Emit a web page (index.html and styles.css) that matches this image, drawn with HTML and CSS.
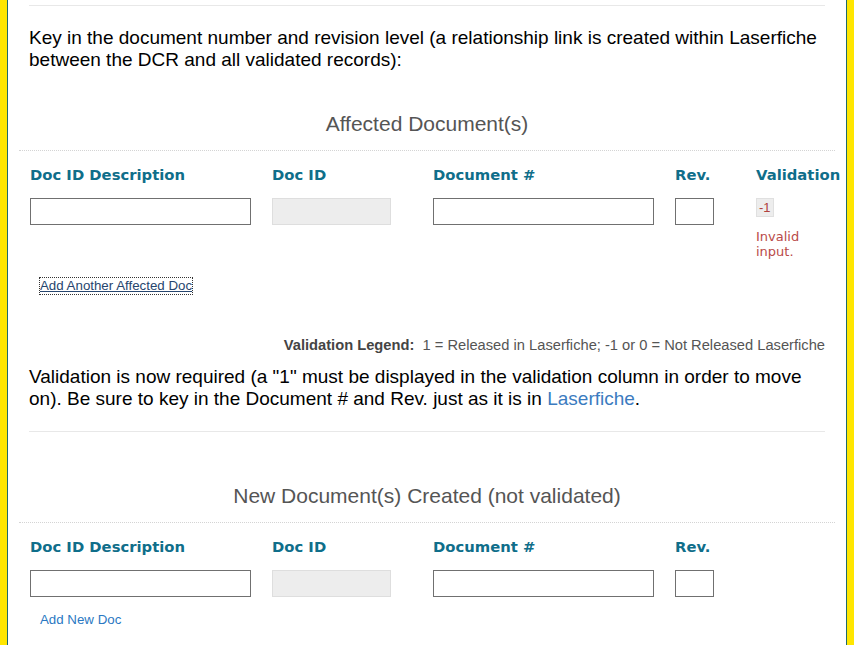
FILE: index.html
```html
<!DOCTYPE html>
<html>
<head>
    <title>Document Change Request</title>
    <link rel="stylesheet" href="styles.css">
</head>
<body>

<div class="page">
    <hr class="rule rule-top">

    <p class="intro">Key in the document number and revision level (a relationship link is created within Laserfiche between the DCR and all validated records):</p>

    <!-- Affected documents -->
    <div class="section">
        <h2 class="section-title">Affected Document(s)</h2>
        <div class="doc-grid">
            <label class="col-head">Doc ID Description</label>
            <label class="col-head">Doc ID</label>
            <label class="col-head">Document #</label>
            <label class="col-head">Rev.</label>
            <label class="col-head">Validation</label>

            <div class="cell"><input type="text" class="field field-wide"></div>
            <div class="cell"><input type="text" class="field field-mid" readonly></div>
            <div class="cell"><input type="text" class="field field-wide"></div>
            <div class="cell"><input type="text" class="field field-rev"></div>
            <div class="cell">
                <span class="valid-box">-1</span>
                <div class="error-msg">Invalid<br>input.</div>
            </div>
        </div>
        <a href="#" class="add-link add-focus">Add Another Affected Doc</a>
    </div>

    <p class="legend"><b>Validation Legend:</b>&nbsp; 1 = Released in Laserfiche; -1 or 0 = Not Released Laserfiche</p>

    <p class="note">Validation is now required (a "1" must be displayed in the validation column in order to move on). Be sure to key in the Document # and Rev. just as it is in <a href="#" class="note-link">Laserfiche</a>.</p>

    <hr class="rule rule-mid">

    <!-- New documents -->
    <div class="section">
        <h2 class="section-title">New Document(s) Created (not validated)</h2>
        <div class="doc-grid">
            <label class="col-head">Doc ID Description</label>
            <label class="col-head">Doc ID</label>
            <label class="col-head">Document #</label>
            <label class="col-head">Rev.</label>
            <span></span>

            <div class="cell"><input type="text" class="field field-wide"></div>
            <div class="cell"><input type="text" class="field field-mid" readonly></div>
            <div class="cell"><input type="text" class="field field-wide"></div>
            <div class="cell"><input type="text" class="field field-rev"></div>
            <div class="cell"></div>
        </div>
        <a href="#" class="add-link add-plain">Add New Doc</a>
    </div>
</div>

</body>
</html>
```

FILE: styles.css
```css
html, body {
    height: 100%;
}
body {
    margin: 0;
    background: #ffe600;
    font-family: 'Liberation Sans', Arial, sans-serif;
    color: #000;
    overflow: hidden;
}
.page {
    margin: 0 7px;
    min-height: 100%;
    background: #fff;
    border-left: 1px solid #1f6a6a;
    border-right: 1px solid #1f6a6a;
    padding: 0 11px;
}

.rule {
    border: none;
    border-top: 1px solid #e8e8e8;
    margin: 0 10px;
}
.rule-top {
    position: relative;
    top: 5px;
}
.rule-mid {
    margin-top: 21px;
}

.intro {
    font-size: 19px;
    line-height: 22px;
    margin: 26px 10px 0;
}

.section-title {
    font-size: 21px;
    font-weight: normal;
    color: #555;
    text-align: center;
    line-height: 24px;
    margin: 0;
    padding-bottom: 14px;
    border-bottom: 1px dotted #d4d4d4;
}
.section:first-of-type .section-title {
    margin-top: 41px;
}
.rule-mid + .section .section-title {
    margin-top: 52px;
}

.doc-grid {
    display: grid;
    grid-template-columns: 242px 161px 242px 81px 1fr;
    padding-left: 11px;
    margin-top: 15px;
}
.col-head {
    font-family: 'DejaVu Sans', Verdana, sans-serif;
    font-weight: bold;
    font-size: 14.8px;
    line-height: 18px;
    color: #0f6e8a;
    margin-bottom: 14px;
    white-space: nowrap;
}
.field {
    display: block;
    box-sizing: border-box;
    height: 27px;
    margin: 0;
    border: 1px solid #707070;
    background: #fff;
    font-size: 14px;
}
.field-wide {
    width: 221px;
}
.field-mid {
    width: 119px;
    background: #ededed;
    border-color: #dedede;
}
.field-rev {
    width: 39px;
}
.valid-box {
    display: inline-block;
    box-sizing: border-box;
    height: 19px;
    padding: 0 2px;
    background: #ededed;
    border: 1px solid #e0e0e0;
    color: #b0413e;
    font-size: 13px;
    line-height: 17px;
}
.error-msg {
    font-family: 'DejaVu Sans', Verdana, sans-serif;
    font-size: 13px;
    line-height: 15px;
    color: #b94a48;
    margin-top: 12px;
}

.add-link {
    display: inline-block;
    font-size: 13.3px;
    line-height: 16px;
    margin-left: 21px;
}
.add-focus {
    color: #26456e;
    text-decoration: underline;
    outline: 1px dotted #333;
    margin-top: 19px;
}
.add-plain {
    color: #2a78c2;
    text-decoration: none;
    margin-top: 15px;
}

.legend {
    text-align: right;
    font-size: 14.7px;
    color: #555;
    margin: 43px 10px 0 0;
    line-height: 16px;
}
.legend b {
    color: #444;
}

.note {
    font-size: 19px;
    line-height: 22px;
    margin: 13px 10px 0;
}
.note-link {
    color: #3b7bbf;
    text-decoration: none;
}
```
